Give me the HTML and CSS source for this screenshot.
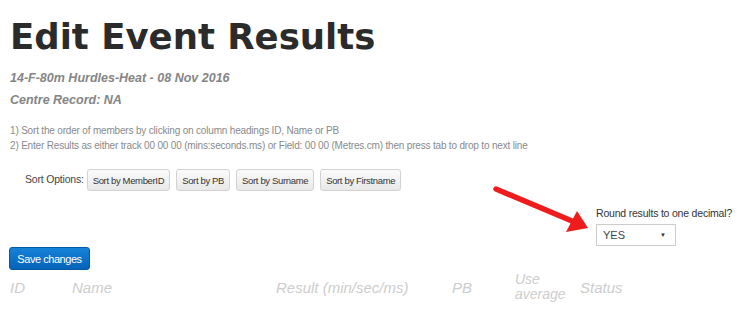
FILE: index.html
```html
<!DOCTYPE html>
<html>
<head>
<meta charset="utf-8">
<link rel="stylesheet" href="styles.css">
</head>
<body>
<div class="page">
  <h1 class="title">Edit Event Results</h1>
  <h4 class="sub first">14-F-80m Hurdles-Heat - 08 Nov 2016</h4>
  <h4 class="sub">Centre Record: NA</h4>
  <div class="instr">
    <p>1) Sort the order of members by clicking on column headings ID, Name or PB</p>
    <p>2) Enter Results as either track 00 00 00 (mins:seconds.ms) or Field: 00 00 (Metres.cm) then press tab to drop to next line</p>
  </div>
  <div class="sortrow">
    <span class="sortlabel">Sort Options:</span>
    <button class="btn">Sort by MemberID</button>
    <button class="btn">Sort by PB</button>
    <button class="btn">Sort by Surname</button>
    <button class="btn">Sort by Firstname</button>
  </div>
  <div class="roundrow">
    <div class="round">
      <div class="roundlabel">Round results to one decimal?</div>
      <div class="select"><span>YES</span><span class="caret">▼</span></div>
    </div>
  </div>
  <svg class="arrow" width="100" height="50" viewBox="0 0 100 50">
    <line x1="3" y1="3" x2="79" y2="35" stroke="#ee1c1c" stroke-width="5.5" stroke-linecap="round"/>
    <polygon points="95,42 73,46 84,25" fill="#ee1c1c"/>
  </svg>
  <button class="save">Save changes</button>
  <div class="thead">
    <span class="c-id">ID</span>
    <span class="c-name">Name</span>
    <span class="c-res">Result (min/sec/ms)</span>
    <span class="c-pb">PB</span>
    <span class="c-avg">Use<br>average</span>
    <span class="c-status">Status</span>
  </div>
</div>
</body>
</html>
```

FILE: styles.css
```css
html, body {
  margin: 0;
  padding: 0;
  background: #fff;
  font-family: "Liberation Sans", Arial, sans-serif;
}
.page {
  position: relative;
  padding: 0 0 0 10px;
  width: 743px;
  height: 309px;
  overflow: hidden;
}
.title {
  margin: 0;
  padding-top: 10px;
  font-family: "DejaVu Sans", "Liberation Sans", sans-serif;
  font-size: 35.5px;
  line-height: 54px;
  font-weight: bold;
  color: #2b2b2b;
}
.sub {
  margin: 0;
  font-size: 12.5px;
  font-weight: bold;
  font-style: italic;
  color: #858585;
  line-height: 22px;
}
.sub.first {
  margin-top: 3px;
}
.instr {
  margin-top: 12px;
  font-size: 10px;
  letter-spacing: -0.18px;
  color: #8a8a8a;
  line-height: 15px;
}
.instr p { margin: 0; }
.sortrow {
  display: flex;
  align-items: center;
  gap: 6px;
  margin-top: 16px;
  padding-left: 15px;
}
.sortlabel {
  font-size: 10.5px;
  letter-spacing: -0.2px;
  color: #444;
  margin-right: -3px;
  margin-top: -2px;
}
.btn {
  font-family: "Liberation Sans", Arial, sans-serif;
  font-size: 9.5px;
  letter-spacing: -0.35px;
  color: #333;
  background: linear-gradient(#fbfbfb, #e8e8e8);
  border: 1px solid #d2d2d2;
  border-radius: 3px;
  height: 22px;
  padding: 0 5px;
}
.roundrow {
  display: flex;
  padding-left: 586px;
  height: 56px;
}
.round {
  padding-top: 15px;
}
.roundlabel {
  font-size: 10.5px;
  letter-spacing: -0.2px;
  color: #333;
  line-height: 14px;
  white-space: nowrap;
}
.select {
  margin-top: 4px;
  width: 80px;
  height: 22px;
  box-sizing: border-box;
  border: 1px solid #ccc;
  display: flex;
  align-items: center;
  justify-content: space-between;
  padding: 0 9px 0 6px;
  font-size: 11px;
  color: #444;
}
.caret {
  font-size: 6px;
  color: #333;
}
.arrow {
  position: absolute;
  left: 493px;
  top: 186px;
}
.save {
  display: block;
  font-family: "Liberation Sans", Arial, sans-serif;
  font-size: 11px;
  letter-spacing: -0.45px;
  color: #fff;
  background: linear-gradient(#1582d8, #0563b8);
  border: 1px solid #0559a6;
  border-radius: 3px;
  height: 23px;
  width: 81px;
  padding: 0;
  margin-left: -1px;
}
.thead {
  display: flex;
  align-items: center;
  height: 34px;
  font-size: 15px;
  font-style: italic;
  color: #cdcdcd;
}
.thead span { display: block; }
.c-id { width: 62px; }
.c-name { width: 204px; }
.c-res { width: 176px; }
.c-pb { width: 63px; }
.c-avg { width: 65px; line-height: 15px; font-size: 14px; }
```
